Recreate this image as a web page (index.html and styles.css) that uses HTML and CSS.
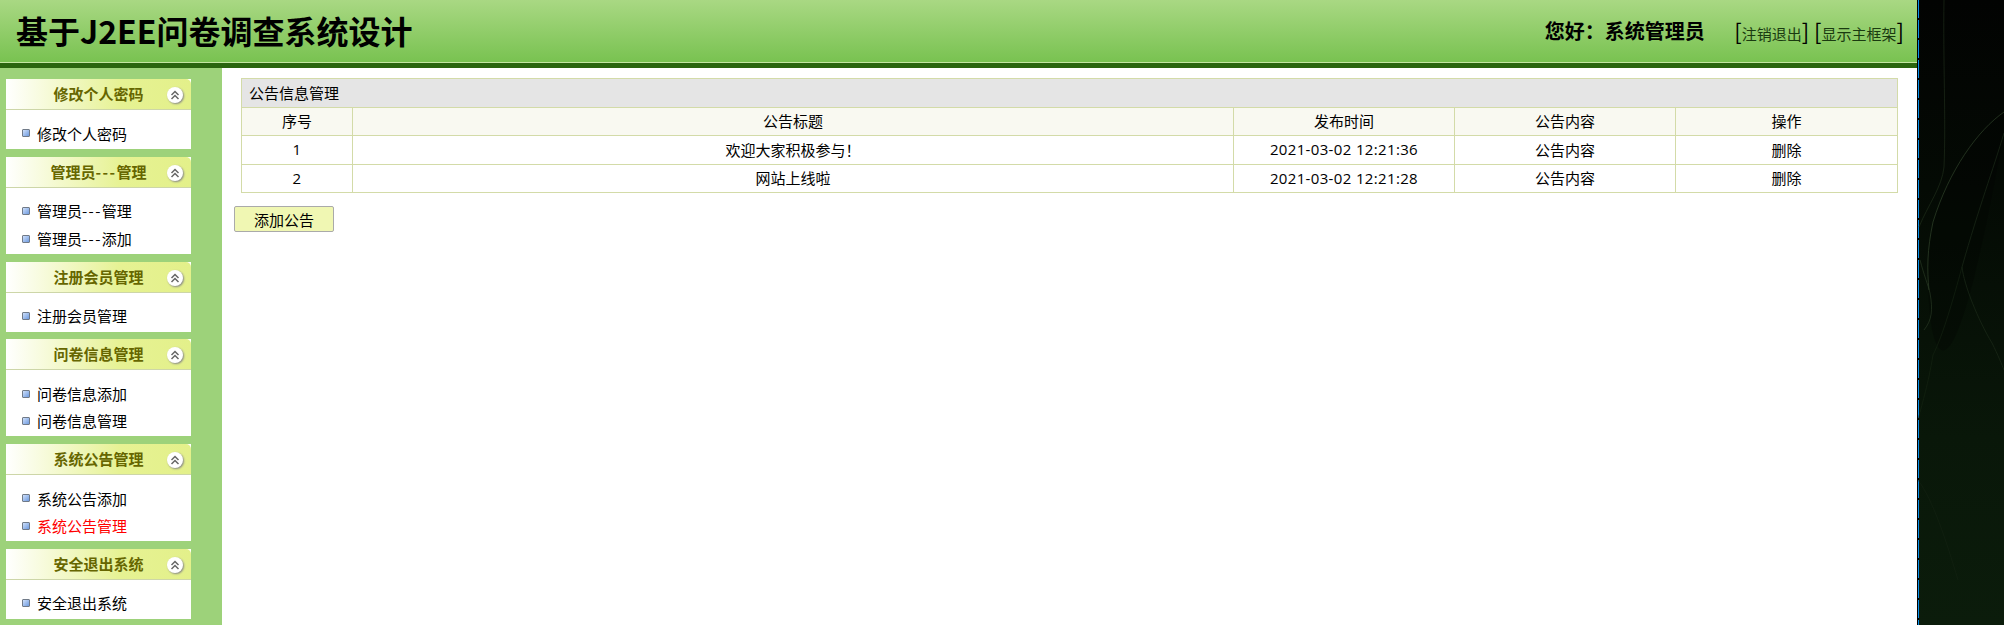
FILE: index.html
```html
<!DOCTYPE html>
<html>
<head>
    <meta charset="UTF-8">
    <title>基于J2EE问卷调查系统设计</title>
    <link rel="stylesheet" href="styles.css">
</head>
<body>
<div class="page">
    <div class="main">
        <div class="top">
            <div class="logo">基于J2EE问卷调查系统设计</div>
            <div class="user">您好：系统管理员</div>
            <div class="toplinks"><b>[</b>注销退出<b>]</b><b class="sp">[</b>显示主框架<b>]</b></div>
        </div>
        <div class="content">
            <div class="left">
                <div class="box one">
                    <div class="box_t"><span>修改个人密码</span><i class="up"><svg width="10" height="10" viewBox="0 0 10 10"><path d="M1.5 5 5 1.5 8.5 5M1.5 9 5 5.5 8.5 9" fill="none" stroke="#666" stroke-width="1.5"/></svg></i></div>
                    <ul><li><em></em>修改个人密码</li></ul>
                </div>
                <div class="box two">
                    <div class="box_t"><span>管理员<s>---</s>管理</span><i class="up"><svg width="10" height="10" viewBox="0 0 10 10"><path d="M1.5 5 5 1.5 8.5 5M1.5 9 5 5.5 8.5 9" fill="none" stroke="#666" stroke-width="1.5"/></svg></i></div>
                    <ul><li><em></em>管理员<s>---</s>管理</li><li><em></em>管理员<s>---</s>添加</li></ul>
                </div>
                <div class="box one">
                    <div class="box_t"><span>注册会员管理</span><i class="up"><svg width="10" height="10" viewBox="0 0 10 10"><path d="M1.5 5 5 1.5 8.5 5M1.5 9 5 5.5 8.5 9" fill="none" stroke="#666" stroke-width="1.5"/></svg></i></div>
                    <ul><li><em></em>注册会员管理</li></ul>
                </div>
                <div class="box two">
                    <div class="box_t"><span>问卷信息管理</span><i class="up"><svg width="10" height="10" viewBox="0 0 10 10"><path d="M1.5 5 5 1.5 8.5 5M1.5 9 5 5.5 8.5 9" fill="none" stroke="#666" stroke-width="1.5"/></svg></i></div>
                    <ul><li><em></em>问卷信息添加</li><li><em></em>问卷信息管理</li></ul>
                </div>
                <div class="box two">
                    <div class="box_t"><span>系统公告管理</span><i class="up"><svg width="10" height="10" viewBox="0 0 10 10"><path d="M1.5 5 5 1.5 8.5 5M1.5 9 5 5.5 8.5 9" fill="none" stroke="#666" stroke-width="1.5"/></svg></i></div>
                    <ul><li><em></em>系统公告添加</li><li class="on"><em></em>系统公告管理</li></ul>
                </div>
                <div class="box one">
                    <div class="box_t"><span>安全退出系统</span><i class="up"><svg width="10" height="10" viewBox="0 0 10 10"><path d="M1.5 5 5 1.5 8.5 5M1.5 9 5 5.5 8.5 9" fill="none" stroke="#666" stroke-width="1.5"/></svg></i></div>
                    <ul><li><em></em>安全退出系统</li></ul>
                </div>
            </div>
            <div class="right">
                <table class="list">
                    <colgroup><col class="c1"><col><col class="c3"><col class="c4"><col class="c5"></colgroup>
                    <tr><td colspan="5" class="title">公告信息管理</td></tr>
                    <tr class="head">
                        <td>序号</td><td>公告标题</td><td>发布时间</td><td>公告内容</td><td>操作</td>
                    </tr>
                    <tr>
                        <td class="num">1</td><td>欢迎大家积极参与！</td><td class="num">2021-03-02 12:21:36</td><td>公告内容</td><td>删除</td>
                    </tr>
                    <tr>
                        <td class="num">2</td><td>网站上线啦</td><td class="num">2021-03-02 12:21:28</td><td>公告内容</td><td>删除</td>
                    </tr>
                </table>
                <button class="btn">添加公告</button>
            </div>
        </div>
    </div>
    <div class="side_bg">
        <svg width="86" height="625" viewBox="0 0 86 625" fill="none">
            <path d="M86 112C60 130 31 170 15 222 8 250 9 300 14 330 30 400 60 280 86 130Z" fill="#000" fill-opacity=".25"/>
            <path d="M86 112C60 130 31 170 15 222 9 250 9 270 11 290" stroke="#2f4229" stroke-opacity=".7"/>
            <path d="M26 0C25 60 28 120 26 167 24 187 10 205 1 227" stroke="#24341f" stroke-opacity=".55"/>
            <path d="M2 260C6 275 10 285 12 293 15 310 14 320 6 330" stroke="#2f4229" stroke-opacity=".55"/>
            <path d="M86 133C75 170 61 207 44 267 46 285 60 320 74 343 80 355 84 365 86 370" stroke="#1b2a18" stroke-opacity=".7"/>
            <path d="M44 267C35 300 25 335 15 355 10 385 5 400 0 420" stroke="#152413" stroke-opacity=".6"/>
            <path d="M0 480C15 500 28 540 40 580" stroke="#152413" stroke-opacity=".5"/>
        </svg>
    </div>
</div>
</body>
</html>
```

FILE: styles.css
```css
html,body{margin: 0; padding: 0; height: 625px; overflow: hidden;}
body{font: 15px "Noto Sans CJK SC",sans-serif; color: #000; background: #fff;}
ul{padding: 0; margin: 0;} li{list-style: none;}
s{text-decoration: none; letter-spacing: 1.4px;}

.page{display: flex; width: 2004px; height: 625px;}
.main{width: 1917px; flex: none; display: flex; flex-direction: column;}
.side_bg{flex: 1; border-left: 1px solid #000;
    background: repeating-linear-gradient(to bottom,#0a8fe8 0,#0a8fe8 18px,#000 18px,#000 20px) 0 0/1px 100% no-repeat,
        linear-gradient(to bottom,#020302 0,#040a04 30%,#091709 70%,#0b1c0b 100%);}
.side_bg svg{display: block;}

.top{height: 62px; padding-bottom: 1px; display: flex; align-items: center; flex: none;
    background: linear-gradient(to bottom,#a9d883 0,#78c250 100%);
    border-bottom: 5px solid #2a650f; box-shadow: inset 0 -1px 0 #c4e6a2;}
.logo{font-size: 32px; font-weight: bold; margin: -3px 0 0 16px; flex: 1; white-space: nowrap;}
.user{font-size: 20px; font-weight: bold; margin-top: -2px;}
.toplinks{margin: -2px 13px 0 29.5px; white-space: nowrap; color: #1a3a10;}
.toplinks b{font-size: 22px; font-weight: normal; color: #000;}
.toplinks .sp{margin-left: 5px;}

.content{flex: 1; display: flex; min-height: 0;}
.left{width: 222px; flex: none; background: #9dd27a; box-sizing: border-box; padding: 11px 31px 0 6px;
    display: flex; flex-direction: column;}
.box{background: #fff; margin-bottom: 7.8px; flex: none;}
.box.one{height: 70px;}
.box.two{height: 97px;}
.box_t{height: 31px; position: relative; text-align: center; box-sizing: border-box; font-weight: bold; color: #666600;
    line-height: 30px; border-radius: 5px 5px 0 0; border-bottom: 1px solid #cdd6a8;
    background: linear-gradient(to right,#fff 0,#e6f293 62%,#e3f08a 100%);}
.up{position: absolute; right: 8px; top: 8px; width: 16px; height: 16px; border-radius: 50%; background: #fff;
    box-shadow: 1px 1px 2px #888; display: flex; align-items: center; justify-content: center;}
.box ul{padding-top: 9.5px;}
.box li{height: 27.5px; line-height: 27.5px; padding-left: 16px; display: flex; align-items: center; white-space: pre;}
.box li.on{color: #f00;}
.box li em{width: 6px; height: 6px; margin-right: 7px; border: 1px solid #707a88; border-radius: 1px;
    background: linear-gradient(135deg,#cfe0fa,#6f9be0);}

.right{flex: 1; padding: 10px 20px 0 12px;}
.list{border-collapse: collapse; width: 1657px; margin-left: 7px; table-layout: fixed;}
.list td{border: 1px solid #d3dba8; text-align: center; height: 26.5px; padding: 0 0 1px;}
.list .title{background: #e5e5e5; text-align: left; padding-left: 7px;}
.list .head td{background: #f9f9f1;}
.list .num{font-family: "Open Sans","Noto Sans CJK SC",sans-serif; letter-spacing: .35px;}
.c1{width: 111px;} .c3{width: 221px;} .c4{width: 221px;} .c5{width: 222px;}
.btn{display: block; width: 100px; height: 26px; margin-top: 13px; padding: 0; font: inherit; color: #000;
    background: #f0f7b3; border: 1px solid #aaa; border-radius: 2px;}
```
